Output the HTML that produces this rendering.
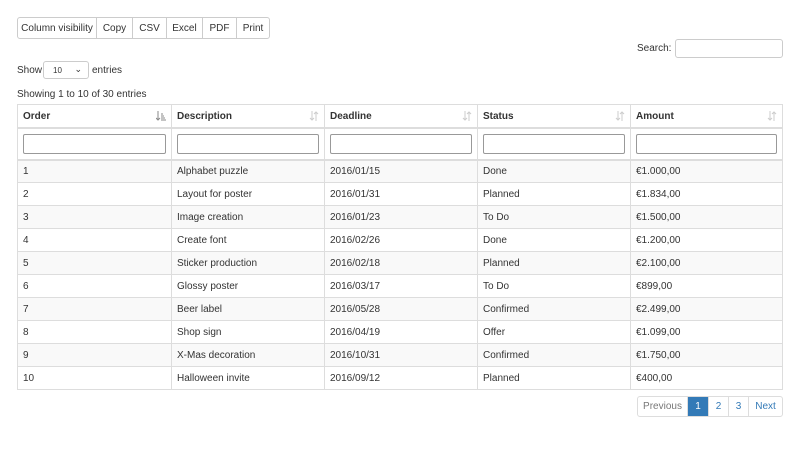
<!DOCTYPE html>
<html><head><meta charset="utf-8"><style>
*{box-sizing:border-box}
body{margin:0;width:800px;height:450px;background:#fff;font-family:"Liberation Sans",sans-serif;font-size:10px;color:#333;position:relative;overflow:hidden}
.btns{position:absolute;left:17px;top:17px;display:flex;border:1px solid #ccc;border-radius:3px;height:22px}
.btns div{display:flex;align-items:center;justify-content:center;border-right:1px solid #ccc;font-size:10px;height:20px}
.btns div:last-child{border-right:0}
.abs{position:absolute}
input.s{position:absolute;left:675px;top:39px;width:108px;height:19px;border:1px solid #ccc;border-radius:3px}
.sel{position:absolute;left:43px;top:61px;width:46px;height:18px;border:1px solid #ccc;border-radius:3px;font-size:8px;padding:4px 0 0 9px}
table{position:absolute;left:17px;top:104px;width:766px;border-collapse:collapse;table-layout:fixed}
td,th{border:1px solid #ddd;padding:0 5px;text-align:left;font-size:10px}
th{height:23px;position:relative;border-bottom:2px solid #ddd;padding-top:1px}
th svg{position:absolute;right:5px;top:6px}
tr.f td{height:31px;padding:5px;border-bottom:2px solid #ddd}
tr.f td div{height:20px;border:1px solid #999;border-radius:2px}
tbody tr td{height:23px;padding-top:1px}
tbody tr:nth-child(odd) td{background:#f9f9f9}
.pg{position:absolute;left:637px;top:396px;display:flex;border:1px solid #ddd;border-radius:3px;height:21px}
.pg div{display:flex;align-items:center;justify-content:center;height:19px;border-right:1px solid #ddd;color:#337ab7}
.pg div:last-child{border-right:0}
</style></head><body>
<div class="btns"><div style="width:79px">Column visibility</div><div style="width:36px">Copy</div><div style="width:34px">CSV</div><div style="width:36px">Excel</div><div style="width:34px">PDF</div><div style="width:32px">Print</div></div>
<div class="abs" style="left:637px;top:43px">Search:</div>
<input class="s">
<div class="abs" style="left:17px;top:65px">Show</div>
<div class="sel">10<span style="position:absolute;right:6px;top:2px;font-size:9px">⌄</span></div>
<div class="abs" style="left:92px;top:65px">entries</div>
<div class="abs" style="left:17px;top:89px">Showing 1 to 10 of 30 entries</div>
<table>
<colgroup><col style="width:154px"><col style="width:153px"><col style="width:153px"><col style="width:153px"><col></colgroup>
<tr><th>Order<svg width="10" height="10" viewBox="0 0 10 10"><path d="M2 0v9M0 7l2 2 2-2" stroke="#888" fill="none"/><path d="M5 3h2M5 5h3M5 7h4M5 9h5" stroke="#888"/></svg></th>
<th>Description<svg width="10" height="10" viewBox="0 0 10 10"><path d="M3 0v9M1 7l2 2 2-2M7 10V1M5 3l2-2 2 2" stroke="#ccc" fill="none"/></svg></th>
<th>Deadline<svg width="10" height="10" viewBox="0 0 10 10"><path d="M3 0v9M1 7l2 2 2-2M7 10V1M5 3l2-2 2 2" stroke="#ccc" fill="none"/></svg></th>
<th>Status<svg width="10" height="10" viewBox="0 0 10 10"><path d="M3 0v9M1 7l2 2 2-2M7 10V1M5 3l2-2 2 2" stroke="#ccc" fill="none"/></svg></th>
<th>Amount<svg width="10" height="10" viewBox="0 0 10 10"><path d="M3 0v9M1 7l2 2 2-2M7 10V1M5 3l2-2 2 2" stroke="#ccc" fill="none"/></svg></th></tr>
<tr class="f"><td><div></div></td><td><div></div></td><td><div></div></td><td><div></div></td><td><div></div></td></tr>
<tbody>
<tr><td>1</td><td>Alphabet puzzle</td><td>2016/01/15</td><td>Done</td><td>€1.000,00</td></tr>
<tr><td>2</td><td>Layout for poster</td><td>2016/01/31</td><td>Planned</td><td>€1.834,00</td></tr>
<tr><td>3</td><td>Image creation</td><td>2016/01/23</td><td>To Do</td><td>€1.500,00</td></tr>
<tr><td>4</td><td>Create font</td><td>2016/02/26</td><td>Done</td><td>€1.200,00</td></tr>
<tr><td>5</td><td>Sticker production</td><td>2016/02/18</td><td>Planned</td><td>€2.100,00</td></tr>
<tr><td>6</td><td>Glossy poster</td><td>2016/03/17</td><td>To Do</td><td>€899,00</td></tr>
<tr><td>7</td><td>Beer label</td><td>2016/05/28</td><td>Confirmed</td><td>€2.499,00</td></tr>
<tr><td>8</td><td>Shop sign</td><td>2016/04/19</td><td>Offer</td><td>€1.099,00</td></tr>
<tr><td>9</td><td>X-Mas decoration</td><td>2016/10/31</td><td>Confirmed</td><td>€1.750,00</td></tr>
<tr><td>10</td><td>Halloween invite</td><td>2016/09/12</td><td>Planned</td><td>€400,00</td></tr>
</tbody></table>
<div class="pg"><div style="color:#777;width:50px">Previous</div><div style="background:#337ab7;color:#fff;width:21px">1</div><div style="width:20px">2</div><div style="width:20px">3</div><div style="width:33px">Next</div></div>
</body></html>
